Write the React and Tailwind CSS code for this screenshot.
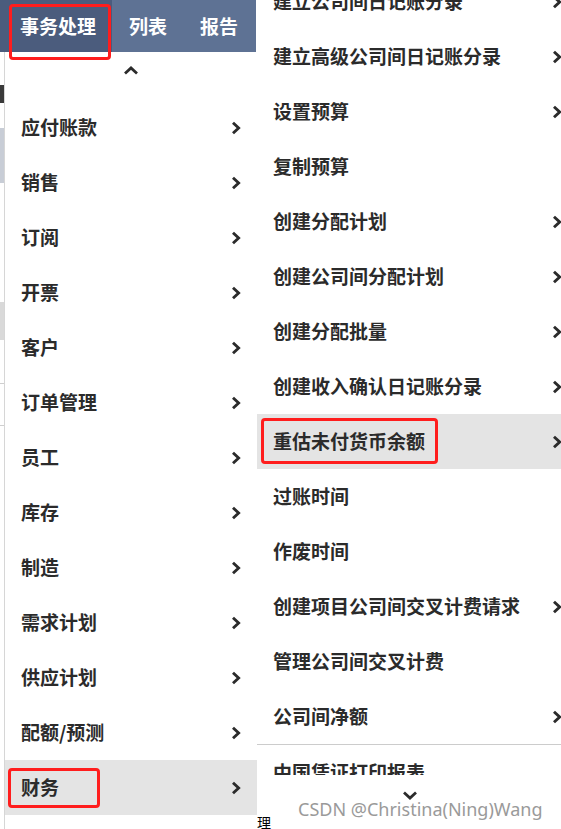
const mainItems = [
  '应付账款',
  '销售',
  '订阅',
  '开票',
  '客户',
  '订单管理',
  '员工',
  '库存',
  '制造',
  '需求计划',
  '供应计划',
  '配额/预测',
  '财务',
]

const financeItems = [
  { label: '建立公司间日记账分录', sub: true },
  { label: '建立高级公司间日记账分录', sub: true },
  { label: '设置预算', sub: true },
  { label: '复制预算', sub: false },
  { label: '创建分配计划', sub: true },
  { label: '创建公司间分配计划', sub: true },
  { label: '创建分配批量', sub: true },
  { label: '创建收入确认日记账分录', sub: true },
  { label: '重估未付货币余额', sub: true },
  { label: '过账时间', sub: false },
  { label: '作废时间', sub: false },
  { label: '创建项目公司间交叉计费请求', sub: true },
  { label: '管理公司间交叉计费', sub: false },
  { label: '公司间净额', sub: true },
]

function Arrow() {
  return (
    <svg width="10" height="14" viewBox="0 0 10 14" className="shrink-0">
      <polyline points="2,1.8 7.6,7 2,12.2" fill="none" stroke="#2b2b2b" strokeWidth="2.9" />
    </svg>
  )
}

// the active item and the open sub item share this grey
function MenuRow({ label, sub, active, wide }) {
  return (
    <div
      className={`flex h-[55px] shrink-0 items-center justify-between pl-[16px] ${
        wide ? 'w-[320px] pr-[15px]' : 'pr-[16px]'
      } ${active ? 'bg-[#e4e4e4]' : 'bg-white'}`}
    >
      <span className="text-[19px] font-bold text-[#2b2b2b]">{label}</span>
      {sub && <Arrow />}
    </div>
  )
}

export default function App() {
  return (
    <div className="relative flex h-[829px] w-[561px] overflow-hidden bg-white font-['Noto_Sans_CJK_SC','Noto_Sans',sans-serif]">
      {/* left: top bar + main menu */}
      <div className="flex w-[257px] shrink-0 flex-col">
        <nav className="flex h-[52px] w-[256px] items-stretch bg-[#5e7294] text-[19px] font-bold text-white">
          <div className="flex items-center bg-[#4b5c7d] pl-[20px] pr-[16px]">事务处理</div>
          <div className="flex items-center px-[17px]">列表</div>
          <div className="flex items-center px-[16px]">报告</div>
        </nav>
        <div className="flex flex-1">
          <div className="flex w-[4px] flex-col bg-white">
            <div className="mt-[33px] h-[18px] bg-[#3a3a3a]" />
            <div className="mt-[25px] h-[55px] bg-[#c8cdd6]" />
            <div className="mt-[119px] h-[38px] bg-[#d9d9d9]" />
            <div className="mt-[43px] h-px bg-[#cfcfcf]" />
            <div className="mt-[41px] h-px bg-[#cfcfcf]" />
          </div>
          <div className="flex flex-1 flex-col border-l border-[#d6d6d6] bg-white">
            <div className="flex h-[48px] justify-center pt-[14px]">
              <svg width="16" height="9" viewBox="0 0 16 9">
                <polyline points="2,7.5 8,2 14,7.5" fill="none" stroke="#2b2b2b" strokeWidth="2.8" />
              </svg>
            </div>
            {mainItems.map((item) => (
              <MenuRow key={item} label={item} sub active={item === '财务'} />
            ))}
            <div className="flex-1 bg-white" />
          </div>
        </div>
      </div>

      {/* right: finance sub menu */}
      <div className="flex flex-1 flex-col overflow-hidden">
        <div className="flex h-[815px] flex-col overflow-hidden bg-white shadow-[-3px_1px_5px_rgba(0,0,0,0.18)]">
          <div className="-mt-[26px] flex flex-col">
            {financeItems.map((item) => (
              <MenuRow
                key={item.label}
                label={item.label}
                sub={item.sub}
                wide
                active={item.label === '重估未付货币余额'}
              />
            ))}
          </div>
          <div className="h-px w-[320px] bg-[#cccccc]" />
          <div className="h-[30px] overflow-hidden">
            <MenuRow label="中国凭证打印报表" wide />
          </div>
          <div className="flex flex-1 justify-center pl-[2px] pt-[16px]">
            <svg width="16" height="9" viewBox="0 0 16 9">
              <polyline points="2,1.5 8,7 14,1.5" fill="none" stroke="#2b2b2b" strokeWidth="2.8" />
            </svg>
          </div>
        </div>
        <div className="flex-1 bg-white text-[14px] leading-[14px] text-black">理</div>
      </div>

      {/* annotation boxes */}
      <div className="pointer-events-none absolute left-[9px] top-[4px] h-[56px] w-[102px] rounded-[4px] border-[3px] border-[#ff1d1d]" />
      <div className="pointer-events-none absolute left-[261px] top-[418px] h-[46px] w-[177px] rounded-[4px] border-[3px] border-[#ff1d1d]" />
      <div className="pointer-events-none absolute left-[8px] top-[768px] h-[40px] w-[92px] rounded-[4px] border-[3px] border-[#ff1d1d]" />

      {/* watermark */}
      <div className="pointer-events-none absolute left-[298px] top-[798px] font-['Noto_Sans',sans-serif] text-[18px] leading-[22px] text-[#9a9a9a] [text-shadow:0_0_2px_#fff]">
        CSDN @Christina(Ning)Wang
      </div>
    </div>
  )
}
